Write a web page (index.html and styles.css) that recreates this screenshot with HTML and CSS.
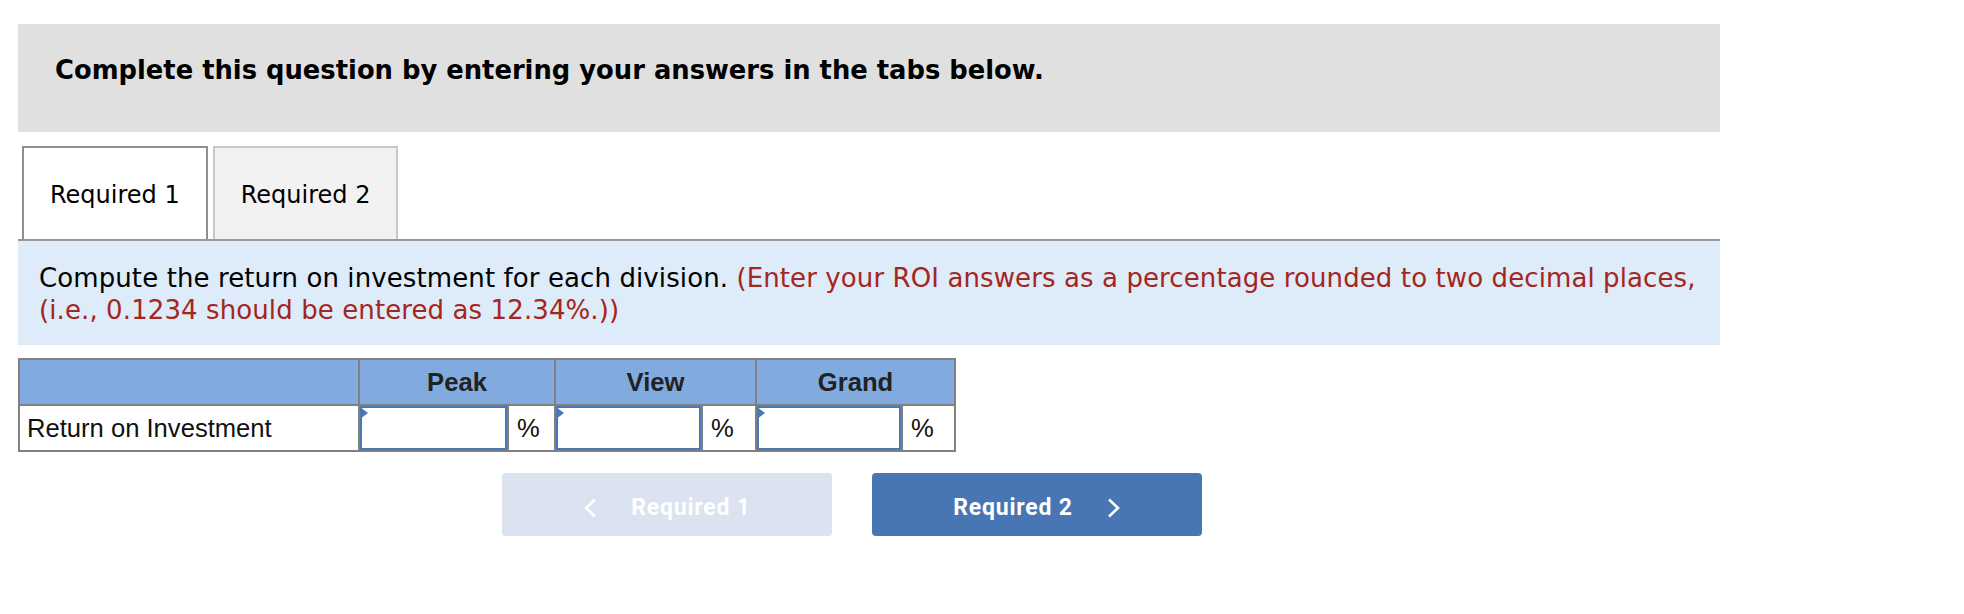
FILE: index.html
```html
<!DOCTYPE html>
<html lang="en">
<head>
<meta charset="utf-8">
<title>Required 1</title>
<link rel="stylesheet" href="styles.css">
</head>
<body>
<div class="page">
  <div class="banner">Complete this question by entering your answers in the tabs below.</div>

  <div class="tabs">
    <div class="tab tab-active">Required 1</div>
    <div class="tab tab-idle">Required 2</div>
  </div>

  <div class="instructions">Compute the return on investment for each division. <span class="hint">(Enter your ROI answers as a percentage rounded to two decimal places, (i.e., 0.1234 should be entered as 12.34%.))</span></div>

  <div class="grid">
    <div class="cell head"></div>
    <div class="cell head span2">Peak</div>
    <div class="cell head span2">View</div>
    <div class="cell head span2">Grand</div>

    <div class="cell label">Return on Investment</div>
    <div class="cell inputcell"><div class="field"><span class="flag"></span></div></div>
    <div class="cell pct">%</div>
    <div class="cell inputcell"><div class="field"><span class="flag"></span></div></div>
    <div class="cell pct">%</div>
    <div class="cell inputcell"><div class="field"><span class="flag"></span></div></div>
    <div class="cell pct">%</div>
  </div>

  <div class="nav">
    <div class="btn btn-disabled">
      <svg class="chev" width="14" height="20" viewBox="0 0 14 20"><path d="M12 1.5 L3 10 L12 18.5" fill="none" stroke="#ffffff" stroke-width="2.6"/></svg>
      <span>Required 1</span>
    </div>
    <div class="btn btn-primary">
      <span>Required 2</span>
      <svg class="chev" width="14" height="20" viewBox="0 0 14 20"><path d="M2 1.5 L11 10 L2 18.5" fill="none" stroke="#ffffff" stroke-width="2.6"/></svg>
    </div>
  </div>
</div>
</body>
</html>
```

FILE: styles.css
```css
html, body {
  margin: 0;
  padding: 0;
  background: #ffffff;
}

.page {
  padding: 24px 0 0 18px;
  width: 1702px;
  font-family: "DejaVu Sans", Verdana, sans-serif;
}

.banner {
  background: #e0e0e0;
  height: 108px;
  box-sizing: border-box;
  padding: 31px 0 0 37px;
  font-weight: bold;
  font-size: 25.8px;
  color: #000000;
}

.tabs {
  margin-top: 14px;
  display: flex;
  gap: 5px;
  padding-left: 4px;
  border-bottom: 2px solid #999999;
}

.tab {
  height: 93px;
  box-sizing: border-box;
  padding: 2px 26px 0 26px;
  display: flex;
  align-items: center;
  font-size: 24px;
  color: #000000;
  border-style: solid;
  border-width: 2px 2px 0 2px;
}

.tab-active {
  background: #ffffff;
  border-color: #8f8f8f;
}

.tab-idle {
  background: #f2f2f2;
  border-color: #c8c8c8;
}

.instructions {
  background: #deebf8;
  padding: 22px 8px 19px 21px;
  font-size: 26px;
  line-height: 31.5px;
  letter-spacing: 0.1px;
  color: #000000;
}

.hint {
  color: #a52520;
}

.grid {
  margin-top: 13px;
  display: grid;
  grid-template-columns: 338px 147px 45px 145px 52px 144px 51px;
  grid-template-rows: 44px 44px;
  gap: 2px;
  padding: 2px;
  background: #808080;
  width: max-content;
  font-family: "Liberation Sans", Arial, sans-serif;
  font-size: 25.6px;
  color: #222222;
}

.cell {
  display: flex;
  align-items: center;
  background: #ffffff;
}

.head {
  background: #81abdf;
  justify-content: center;
  font-weight: bold;
}

.span2 {
  grid-column: span 2;
}

.label {
  padding-left: 7px;
  color: #111111;
}

.pct {
  padding-left: 8px;
  color: #111111;
}

.inputcell {
  align-items: stretch;
}

.field {
  position: relative;
  flex: 1;
  border: 2px solid #4a77b5;
  background: #ffffff;
}

.flag {
  position: absolute;
  left: -2px;
  top: -1px;
  width: 0;
  height: 0;
  border-top: 6px solid transparent;
  border-bottom: 6px solid transparent;
  border-left: 8px solid #4a77b5;
}

.nav {
  margin-top: 21px;
  padding-left: 484px;
  display: flex;
  gap: 40px;
}

.btn {
  width: 330px;
  height: 63px;
  box-sizing: border-box;
  padding-top: 6px;
  border-radius: 4px;
  display: flex;
  align-items: center;
  justify-content: center;
  gap: 34px;
  font-family: Roboto, "Liberation Sans", sans-serif;
  font-weight: bold;
  font-size: 23px;
  letter-spacing: 0.8px;
  color: #ffffff;
}

.btn-disabled {
  background: #dae3ef;
}

.btn-primary {
  background: #4875b3;
}

.chev {
  display: block;
}
```
